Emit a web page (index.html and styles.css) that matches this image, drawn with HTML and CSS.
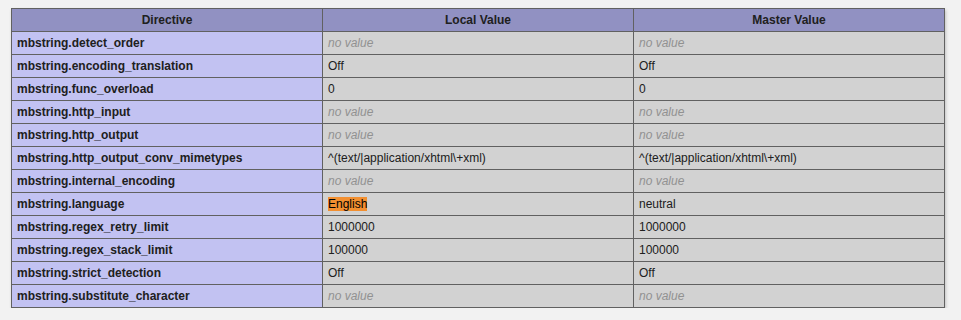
FILE: index.html
```html
<!DOCTYPE html>
<html>
<head>
<meta charset="utf-8">
<link rel="stylesheet" href="styles.css">
</head>
<body>
<div class="wrap">
<table class="info">
<tr class="h"><th>Directive</th><th>Local Value</th><th>Master Value</th></tr>
<tr><td class="e">mbstring.detect_order</td><td class="v"><i>no value</i></td><td class="v"><i>no value</i></td></tr>
<tr><td class="e">mbstring.encoding_translation</td><td class="v">Off</td><td class="v">Off</td></tr>
<tr><td class="e">mbstring.func_overload</td><td class="v">0</td><td class="v">0</td></tr>
<tr><td class="e">mbstring.http_input</td><td class="v"><i>no value</i></td><td class="v"><i>no value</i></td></tr>
<tr><td class="e">mbstring.http_output</td><td class="v"><i>no value</i></td><td class="v"><i>no value</i></td></tr>
<tr><td class="e">mbstring.http_output_conv_mimetypes</td><td class="v">^(text/|application/xhtml\+xml)</td><td class="v">^(text/|application/xhtml\+xml)</td></tr>
<tr><td class="e">mbstring.internal_encoding</td><td class="v"><i>no value</i></td><td class="v"><i>no value</i></td></tr>
<tr><td class="e">mbstring.language</td><td class="v"><span class="hl">English</span></td><td class="v">neutral</td></tr>
<tr><td class="e">mbstring.regex_retry_limit</td><td class="v">1000000</td><td class="v">1000000</td></tr>
<tr><td class="e">mbstring.regex_stack_limit</td><td class="v">100000</td><td class="v">100000</td></tr>
<tr><td class="e">mbstring.strict_detection</td><td class="v">Off</td><td class="v">Off</td></tr>
<tr><td class="e">mbstring.substitute_character</td><td class="v"><i>no value</i></td><td class="v"><i>no value</i></td></tr>
</table>
</div>
</body>
</html>
```
FILE: styles.css
```css
html, body {
  margin: 0;
  padding: 0;
  background: #f2f2f2;
  color: #202020;
  font-family: "Liberation Sans", Arial, sans-serif;
}
.wrap {
  padding: 8px 0 0 11px;
}
.info {
  border-collapse: collapse;
  border: 0;
  width: 934px;
  box-shadow: 1px 2px 3px #c2c2c2;
}
.info th, .info td {
  border: 1px solid #616161;
  font-size: 12px;
  line-height: 14px;
  vertical-align: baseline;
  padding: 4px 5px;
  text-align: left;
}
.h th {
  background: #9191c2;
  font-weight: bold;
  text-align: center;
  color: #202020;
}
.e {
  background: #c2c2f2;
  width: 300px;
  font-weight: bold;
}
.v {
  background: #d2d2d2;
  width: 300px;
}
.v i {
  color: #919191;
}
.hl {
  background: #f28f30;
  color: #000;
}
```
